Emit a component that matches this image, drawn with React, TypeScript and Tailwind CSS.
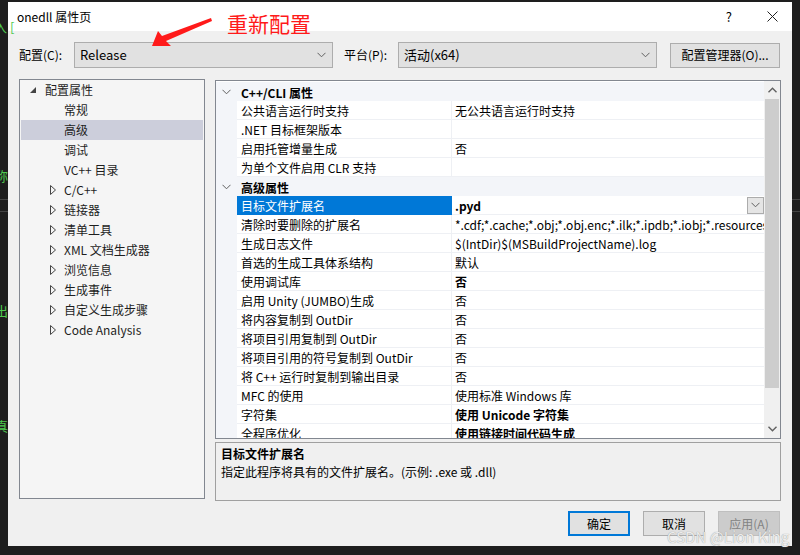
import React from 'react';

const FONT = "font-['Microsoft_YaHei_UI','Noto_Sans_CJK_SC',sans-serif]";

type Prop = { name: string; value: string; bold?: boolean; selected?: boolean };
type Section = { title: string; props: Prop[] };

const sections: Section[] = [
  {
    title: 'C++/CLI 属性',
    props: [
      { name: '公共语言运行时支持', value: '无公共语言运行时支持' },
      { name: '.NET 目标框架版本', value: '' },
      { name: '启用托管增量生成', value: '否' },
      { name: '为单个文件启用 CLR 支持', value: '' },
    ],
  },
  {
    title: '高级属性',
    props: [
      { name: '目标文件扩展名', value: '.pyd', bold: true, selected: true },
      { name: '清除时要删除的扩展名', value: '*.cdf;*.cache;*.obj;*.obj.enc;*.ilk;*.ipdb;*.iobj;*.resources;*.tlb;*.tli' },
      { name: '生成日志文件', value: '$(IntDir)$(MSBuildProjectName).log' },
      { name: '首选的生成工具体系结构', value: '默认' },
      { name: '使用调试库', value: '否', bold: true },
      { name: '启用 Unity (JUMBO)生成', value: '否' },
      { name: '将内容复制到 OutDir', value: '否' },
      { name: '将项目引用复制到 OutDir', value: '否' },
      { name: '将项目引用的符号复制到 OutDir', value: '否' },
      { name: '将 C++ 运行时复制到输出目录', value: '否' },
      { name: 'MFC 的使用', value: '使用标准 Windows 库' },
      { name: '字符集', value: '使用 Unicode 字符集', bold: true },
      { name: '全程序优化', value: '使用链接时间代码生成', bold: true },
    ],
  },
];

const treeItems: Array<{ label: string; level: 0 | 1; expander?: 'open' | 'closed'; selected?: boolean }> = [
  { label: '配置属性', level: 0, expander: 'open' },
  { label: '常规', level: 1 },
  { label: '高级', level: 1, selected: true },
  { label: '调试', level: 1 },
  { label: 'VC++ 目录', level: 1 },
  { label: 'C/C++', level: 1, expander: 'closed' },
  { label: '链接器', level: 1, expander: 'closed' },
  { label: '清单工具', level: 1, expander: 'closed' },
  { label: 'XML 文档生成器', level: 1, expander: 'closed' },
  { label: '浏览信息', level: 1, expander: 'closed' },
  { label: '生成事件', level: 1, expander: 'closed' },
  { label: '自定义生成步骤', level: 1, expander: 'closed' },
  { label: 'Code Analysis', level: 1, expander: 'closed' },
];

function Chevron({ className = '' }: { className?: string }) {
  return (
    <svg width="9" height="6" viewBox="0 0 9 6" className={className}>
      <polyline points="0.5,0.8 4.5,4.8 8.5,0.8" fill="none" stroke="#606060" strokeWidth="1" />
    </svg>
  );
}

function SelectBox({ value, width }: { value: string; width: string }) {
  return (
    <div className={`${width} h-[26px] bg-[#e1e1e1] border border-[#adadad] flex items-center justify-between pl-[5px] pr-[6px]`}>
      <span className="text-[13px] text-black">{value}</span>
      <Chevron />
    </div>
  );
}

function TreeRow({ item }: { item: (typeof treeItems)[number] }) {
  return (
    <div className={`h-[20px] flex items-center ${item.selected ? 'bg-[#cccedb]' : ''}`}>
      <div className={`${item.level === 0 ? 'w-[24px] pl-[9px]' : 'w-[43px] pl-[29px]'} flex items-center`}>
        {item.expander === 'open' && (
          <svg width="6" height="6" viewBox="0 0 6 6">
            <polygon points="6,0 6,6 0,6" fill="#444" />
          </svg>
        )}
        {item.expander === 'closed' && (
          <svg width="6" height="10" viewBox="0 0 6 10">
            <polygon points="0.5,0.5 5.5,5 0.5,9.5" fill="none" stroke="#444" strokeWidth="1" />
          </svg>
        )}
      </div>
      <span className="text-[12px] text-[#1e1e1e] whitespace-nowrap">{item.label}</span>
    </div>
  );
}

function CategoryRow({ title }: { title: string }) {
  return (
    <div className="h-[19px] flex items-center bg-[#f3f5f9]">
      <div className="w-[21px] flex justify-center">
        <Chevron />
      </div>
      <span className="pl-[4px] pt-[2px] text-[12px] font-bold text-black">{title}</span>
    </div>
  );
}

function PropRow({ p }: { p: Prop }) {
  return (
    <div className="h-[19px] flex">
      <div className="w-[21px] shrink-0 bg-[#f3f5f9]" />
      <div
        className={`w-[215px] shrink-0 flex items-center pl-[4px] border-b border-r ${
          p.selected ? 'bg-[#0078d7] text-white border-[#0078d7]' : 'bg-white text-black border-[#eef0f4]'
        }`}
      >
        <span className="pt-[2px] text-[12px] whitespace-nowrap">{p.name}</span>
      </div>
      <div className="flex-1 min-w-0 flex items-center justify-between pl-[3px] bg-white border-b border-[#eef0f4] overflow-hidden">
        <span className={`pt-[2px] text-[12px] whitespace-nowrap text-black ${p.bold ? 'font-bold' : ''}`}>{p.value}</span>
        {p.selected && (
          <div className="w-[17px] h-[17px] shrink-0 bg-[#e5e5e5] border border-[#acacac] flex items-center justify-center">
            <Chevron />
          </div>
        )}
      </div>
    </div>
  );
}

function Button({ label, primary, disabled }: { label: string; primary?: boolean; disabled?: boolean }) {
  return (
    <div
      className={`w-[62px] h-[25px] flex items-center justify-center text-[12px] ${
        primary
          ? 'border-2 border-[#0078d7] bg-[#e1e1e1] text-black'
          : disabled
          ? 'border border-[#bfbfbf] bg-[#cccccc] text-[#838383]'
          : 'border border-[#adadad] bg-[#e1e1e1] text-black'
      }`}
    >
      {label}
    </div>
  );
}

export default function App() {
  return (
    <div className={`relative w-[800px] h-[555px] bg-[#1e1e1e] overflow-hidden ${FONT}`}>
      {/* editor fragments behind the dialog */}
      <span className="absolute left-[-6px] top-[17px] text-[13px] text-[#4ec94e]">入 [</span>
      <span className="absolute left-[-5px] top-[166px] text-[13px] text-[#4ec94e]">称</span>
      <span className="absolute left-[-5px] top-[301px] text-[13px] text-[#4ec94e]">出</span>
      <span className="absolute left-[-5px] top-[416px] text-[13px] text-[#4ec94e]">真</span>
      <div className="absolute left-0 top-[199px] w-[8px] h-[1px] bg-[#444]" />
      <div className="absolute left-0 top-[211px] w-[8px] h-[1px] bg-[#444]" />
      <div className="absolute left-[792px] top-[199px] w-[8px] h-[1px] bg-[#444]" />
      <div className="absolute left-[792px] top-[211px] w-[8px] h-[1px] bg-[#444]" />

      <div className="ml-[8px] mt-[2px] w-[784px] h-[544px] bg-[#f0f0f0] flex flex-col">
        {/* title bar */}
        <div className="h-[29px] bg-white flex items-center pl-[9px] pr-[14px]">
          <span className="text-[12px] text-black">onedll 属性页</span>
          <span className="ml-auto text-[13px] text-black">?</span>
          <svg width="11" height="11" viewBox="0 0 11 11" className="ml-[35px]">
            <line x1="0.5" y1="0.5" x2="10.5" y2="10.5" stroke="#222" strokeWidth="1" />
            <line x1="10.5" y1="0.5" x2="0.5" y2="10.5" stroke="#222" strokeWidth="1" />
          </svg>
        </div>

        {/* configuration row */}
        <div className="mt-[11px] h-[26px] flex items-center pl-[11px]">
          <span className="w-[55px] text-[12px] text-black">配置(C):</span>
          <SelectBox value="Release" width="w-[259px]" />
          <span className="ml-[11px] w-[54px] text-[12px] text-black">平台(P):</span>
          <SelectBox value="活动(x64)" width="w-[259px]" />
          <div className="ml-[13px] w-[110px] h-[25px] bg-[#e1e1e1] border border-[#adadad] flex items-center justify-center text-[12px] text-black">
            配置管理器(O)...
          </div>
        </div>

        {/* main area */}
        <div className="mt-[11px] flex pl-[11px]">
          <div className="w-[186px] h-[420px] border border-[#828790] bg-[#f5f5f5] px-[1px]">
            {treeItems.map((t) => (
              <TreeRow key={t.label} item={t} />
            ))}
          </div>

          <div className="ml-[10px] mt-[1px] w-[566px] flex flex-col">
            <div className="h-[359px] border border-[#828790] bg-white flex overflow-hidden">
              <div className="flex-1 min-w-0 pt-[1px]">
                {sections.map((s) => (
                  <div key={s.title}>
                    <CategoryRow title={s.title} />
                    {s.props.map((p) => (
                      <PropRow key={p.name} p={p} />
                    ))}
                  </div>
                ))}
              </div>
              <div className="w-[16px] shrink-0 bg-[#f0f0f0] flex flex-col">
                <div className="h-[18px] flex items-center justify-center">
                  <svg width="9" height="6" viewBox="0 0 9 6">
                    <polyline points="0.5,5.2 4.5,1.2 8.5,5.2" fill="none" stroke="#606060" strokeWidth="1.4" />
                  </svg>
                </div>
                <div className="mx-[1px] h-[289px] bg-[#cdcdcd]" />
                <div className="flex-1" />
                <div className="h-[18px] flex items-center justify-center">
                  <svg width="9" height="6" viewBox="0 0 9 6">
                    <polyline points="0.5,0.8 4.5,4.8 8.5,0.8" fill="none" stroke="#606060" strokeWidth="1.4" />
                  </svg>
                </div>
              </div>
            </div>

            <div className="mt-[3px] h-[59px] border border-[#a0a0a0] bg-[#f0f0f0] px-[5px] pt-[2px]">
              <div className="text-[12px] font-bold text-black leading-[18px]">目标文件扩展名</div>
              <div className="text-[12px] text-black leading-[17px]">指定此程序将具有的文件扩展名。(示例: .exe 或 .dll)</div>
            </div>
          </div>
        </div>

        {/* buttons */}
        <div className="mt-[10px] flex justify-end gap-[13px] pr-[12px]">
          <Button label="确定" primary />
          <Button label="取消" />
          <Button label="应用(A)" disabled />
        </div>
      </div>

      {/* red annotation */}
      <svg className="absolute left-0 top-0" width="800" height="555" viewBox="0 0 800 555">
        <polygon points="152,46 158,31 162,36 211,18 212,21 166,41 171,46" fill="#ff1a1a" />
      </svg>
      <span className="absolute left-[227px] top-[9px] text-[21px] leading-[28px] text-[#ff1a1a]">重新配置</span>

      {/* watermark */}
      <span className="absolute left-[667px] top-[528px] text-[15px] leading-[18px] text-[#ececec] [text-shadow:0_0_1px_#888]">
        CSDN @Lion King
      </span>
    </div>
  );
}
